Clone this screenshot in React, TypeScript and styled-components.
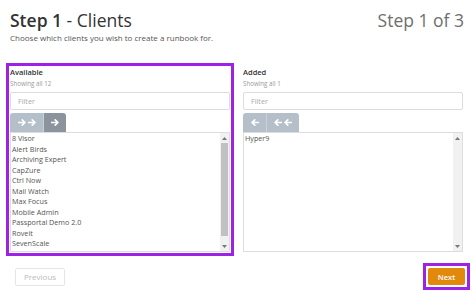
import styled, { createGlobalStyle } from "styled-components";

const GlobalStyle = createGlobalStyle`
  html, body {
    margin: 0;
    background: #fff;
  }
  body {
    font-family: "Open Sans", "Liberation Sans", sans-serif;
    color: #333;
  }
`;

const Page = styled.div`
  width: 474px;
  height: 295px;
  overflow: hidden;
`;

const Header = styled.header`
  display: flex;
  justify-content: space-between;
  align-items: baseline;
  padding: 8px 10px 0;
`;

const Title = styled.h1`
  margin: 0;
  font-size: 17.5px;
  line-height: 24px;
  font-weight: 400;
  color: #333;

  b {
    font-weight: 600;
  }
`;

const StepCount = styled.div`
  font-size: 17.5px;
  line-height: 24px;
  color: #6f6f6f;
`;

const Subtitle = styled.p`
  margin: 0 10px;
  font-size: 8px;
  line-height: 12px;
  color: #555;
`;

const Columns = styled.div`
  display: grid;
  grid-template-columns: 228px 228px;
  gap: 5px;
  padding: 0 6px;
  margin-top: 19px;
`;

const Panel = styled.section<{ $highlight?: boolean }>`
  display: flex;
  flex-direction: column;
  padding: 0 1px 1px;
  border: 3px solid ${(p) => (p.$highlight ? "#9d22e6" : "transparent")};
`;

const PanelLabel = styled.div`
  font-size: 7.5px;
  line-height: 12px;
  font-weight: 600;
  color: #333;
`;

const Counter = styled.div`
  font-size: 6.2px;
  line-height: 11px;
  color: #999;
`;

const FilterInput = styled.input`
  box-sizing: border-box;
  height: 18px;
  margin-top: 3px;
  padding: 0 7px;
  border: 1px solid #ddd;
  border-radius: 2px;
  font-family: inherit;
  font-size: 7.2px;
  color: #555;
  outline: none;

  &::placeholder {
    color: #aaa;
  }
`;

const ButtonGroup = styled.div`
  display: flex;
  margin-top: 3px;
`;

const MoveButton = styled.button<{ $dark?: boolean; $w: number }>`
  display: flex;
  align-items: center;
  justify-content: center;
  gap: 2px;
  width: ${(p) => p.$w}px;
  height: 19px;
  padding: 0;
  border: none;
  background: ${(p) => (p.$dark ? "#8b949c" : "#b4bfc9")};

  &:first-child {
    border-top-left-radius: 3px;
  }
  &:last-child {
    border-top-right-radius: 3px;
  }
  & + & {
    border-left: 1px solid #c9d2da;
  }
`;

const ListBox = styled.div`
  display: flex;
  height: 120px;
  border: 1px solid #ddd;
  box-sizing: border-box;
`;

const Items = styled.ul`
  flex: 1;
  margin: 0;
  padding: 0 0 0 1px;
  list-style: none;
  overflow: hidden;
`;

const Item = styled.li`
  font-size: 7.2px;
  line-height: 10.5px;
  color: #555;
  white-space: nowrap;
`;

const Scrollbar = styled.div`
  display: flex;
  flex-direction: column;
  width: 9px;
  background: #f1f1f1;
`;

const ScrollArrow = styled.div`
  display: flex;
  align-items: center;
  justify-content: center;
  height: 10px;
`;

const ScrollTrack = styled.div`
  flex: 1;
  display: flex;
  flex-direction: column;
  padding: 0 1px;
`;

const Thumb = styled.div`
  height: 93px;
  background: #c1c1c1;
`;

const Footer = styled.footer`
  display: flex;
  justify-content: space-between;
  align-items: center;
  margin-top: 7px;
  padding: 0 4px 0 15px;
`;

const PrevButton = styled.button`
  box-sizing: border-box;
  height: 18px;
  padding: 0 8px;
  border: 1px solid #e6e6e6;
  border-radius: 2px;
  background: #fff;
  font-family: inherit;
  font-size: 8px;
  color: #bbb;
`;

const Highlight = styled.div`
  padding: 2px;
  border: 3px solid #9d22e6;
`;

const NextButton = styled.button`
  display: block;
  box-sizing: border-box;
  width: 37px;
  height: 17px;
  padding: 0;
  border: none;
  border-radius: 2px;
  background: #e2890c;
  font-family: inherit;
  font-size: 7.5px;
  font-weight: 600;
  color: #fff;
`;

function Arrow({ left }: { left?: boolean }) {
  return (
    <svg width="8" height="7" viewBox="0 0 8 7" style={left ? { transform: "scaleX(-1)" } : undefined}>
      <path d="M0.5 3.5H7M4.2 0.8L7 3.5L4.2 6.2" fill="none" stroke="#fff" strokeWidth="1.6" strokeLinecap="round" strokeLinejoin="round" />
    </svg>
  );
}

function Tri({ down }: { down?: boolean }) {
  return (
    <svg width="5" height="3" viewBox="0 0 5 3">
      <path d={down ? "M0 0H5L2.5 3Z" : "M0 3H5L2.5 0Z"} fill="#777" />
    </svg>
  );
}

function FakeScrollbar({ thumb }: { thumb?: boolean }) {
  return (
    <Scrollbar>
      <ScrollArrow>
        <Tri />
      </ScrollArrow>
      <ScrollTrack>{thumb && <Thumb />}</ScrollTrack>
      <ScrollArrow>
        <Tri down />
      </ScrollArrow>
    </Scrollbar>
  );
}

const available = [
  "8 Visor",
  "Alert Birds",
  "Archiving Expert",
  "CapZure",
  "Ctrl Now",
  "Mail Watch",
  "Max Focus",
  "Mobile Admin",
  "Passportal Demo 2.0",
  "Roveit",
  "SevenScale",
];

export default function App() {
  return (
    <Page>
      <GlobalStyle />
      <Header>
        <Title>
          <b>Step 1</b> - Clients
        </Title>
        <StepCount>Step 1 of 3</StepCount>
      </Header>
      <Subtitle>Choose which clients you wish to create a runbook for.</Subtitle>

      <Columns>
        <Panel $highlight>
          <PanelLabel>Available</PanelLabel>
          <Counter>Showing all 12</Counter>
          <FilterInput placeholder="Filter" />
          <ButtonGroup>
            <MoveButton $w={33} title="Move all">
              <Arrow />
              <Arrow />
            </MoveButton>
            <MoveButton $w={23} $dark title="Move selected">
              <Arrow />
            </MoveButton>
          </ButtonGroup>
          <ListBox>
            <Items>
              {available.map((name) => (
                <Item key={name}>{name}</Item>
              ))}
            </Items>
            <FakeScrollbar thumb />
          </ListBox>
        </Panel>

        <Panel>
          <PanelLabel>Added</PanelLabel>
          <Counter>Showing all 1</Counter>
          <FilterInput placeholder="Filter" />
          <ButtonGroup>
            <MoveButton $w={23} title="Remove selected">
              <Arrow left />
            </MoveButton>
            <MoveButton $w={33} title="Remove all">
              <Arrow left />
              <Arrow left />
            </MoveButton>
          </ButtonGroup>
          <ListBox>
            <Items>
              <Item>Hyper9</Item>
            </Items>
            <FakeScrollbar />
          </ListBox>
        </Panel>
      </Columns>

      <Footer>
        <PrevButton>Previous</PrevButton>
        <Highlight>
          <NextButton>Next</NextButton>
        </Highlight>
      </Footer>
    </Page>
  );
}
